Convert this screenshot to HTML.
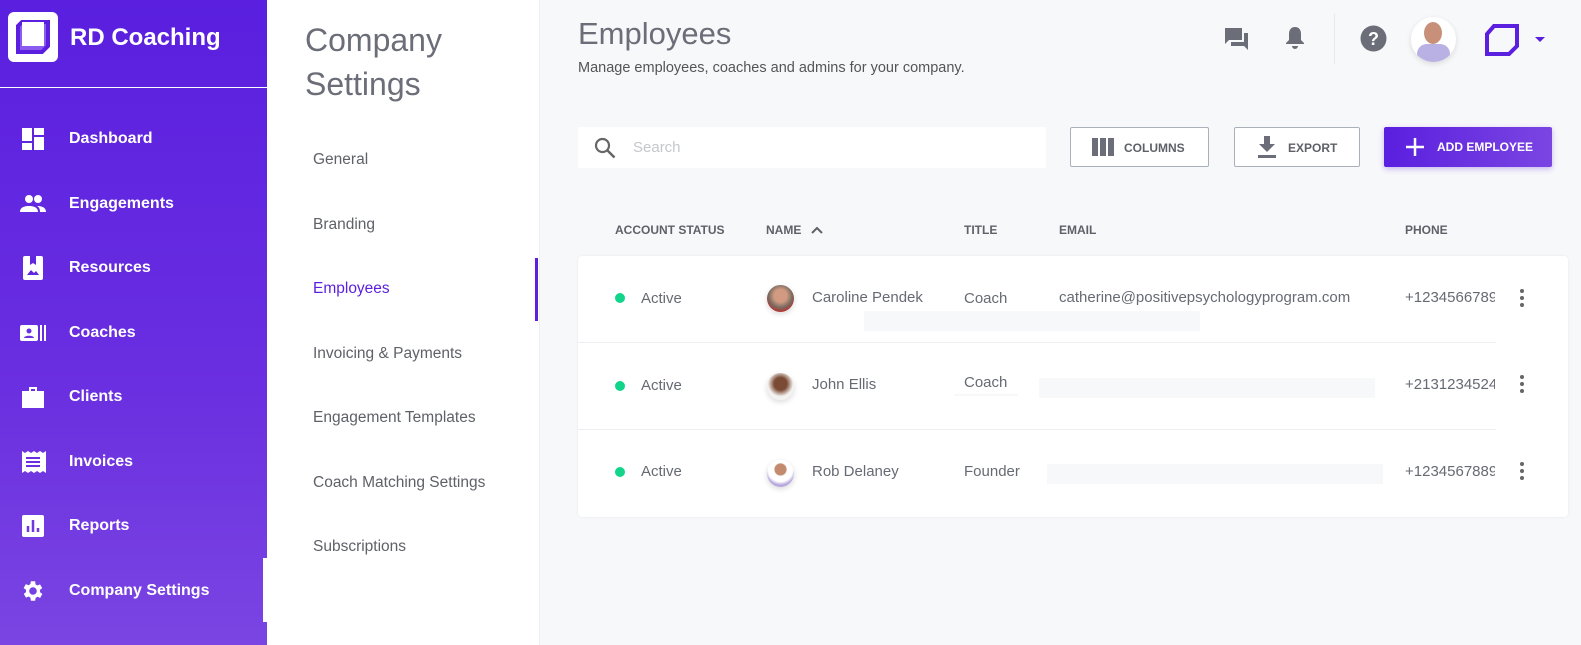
<!DOCTYPE html>
<html><head><meta charset="utf-8"><style>
*{box-sizing:border-box;margin:0;padding:0}
body{width:1581px;height:645px;overflow:hidden;font-family:"Liberation Sans",sans-serif;background:#f7f8fa;position:relative}
.sb{position:absolute;left:0;top:0;width:267px;height:645px;background:linear-gradient(180deg,#5a1fdf 0%,#6a2fe0 60%,#7a45e2 100%);color:#fff}
.logo{position:absolute;left:8px;top:12px;width:50px;height:50px;background:#fff;border-radius:6px}
.brand{position:absolute;left:70px;top:24px;font-size:24px;font-weight:bold}
.div{position:absolute;left:0;top:87px;width:267px;height:1px;background:#fff}
.nav{position:absolute;left:69px;font-size:16px;font-weight:bold}
.ic{position:absolute;left:20px;width:26px;height:26px}
.sel{position:absolute;left:263px;top:558px;width:4px;height:64px;background:#fff}
.p2{position:absolute;left:267px;top:0;width:273px;height:645px;background:#fff;border-right:1px solid #eceef2}
.p2 h1{position:absolute;left:38px;top:18px;font-size:32px;font-weight:normal;color:#6b6e78;line-height:44px}
.p2 a{position:absolute;left:46px;font-size:15.5px;color:#5f6169}
.act{position:absolute;left:268px;top:258px;width:3px;height:63px;background:#5a1fdf}
.t{position:absolute;color:#6b6e78}
.hd{position:absolute;top:223px;font-size:12px;font-weight:bold;color:#5f6169}
.card{position:absolute;left:578px;top:256px;width:990px;height:261px;background:#fff;border-radius:4px;box-shadow:0 0 2px rgba(0,0,0,.08)}
.row{position:absolute;font-size:15px;color:#666a73}
.dot{position:absolute;left:615px;width:10px;height:10px;border-radius:50%;background:#12d48a}
.av{position:absolute;left:767px;width:27px;height:27px;border-radius:50%;box-shadow:0 2px 6px rgba(0,0,0,.15)}
.kb{position:absolute;left:1520px;width:4px}
.kb i{display:block;width:4px;height:4px;border-radius:50%;background:#666;margin-bottom:3px}
.ph{position:absolute;background:#f7f8fa}
.btn{position:absolute;top:127px;height:40px;border:1px solid #a9b0ba;border-radius:2px;background:#fff;font-size:12px;font-weight:bold;color:#5f6169}
</style></head><body>
<div class="sb">
<div class="logo"><svg width="50" height="50" viewBox="0 0 50 50"><path d="M14 10h26v24l-6 6H10V14z" fill="#8a5cf0" stroke="#5a1fdf" stroke-width="4"/><rect x="14" y="10" width="22" height="24" fill="#fff"/></svg></div>
<div class="brand">RD Coaching</div>
<div class="div"></div>
<svg class="ic" style="top:126px" viewBox="0 0 26 26"><path d="M2 2h10v13H2zM14 2h10v7H14zM14 11h10v13H14zM2 17h10v7H2z" fill="#fff"/></svg><div class="nav" style="top:130px">Dashboard</div>
<svg class="ic" style="top:191px" viewBox="0 0 26 26"><circle cx="9" cy="8" r="4" fill="#fff"/><circle cx="18" cy="8" r="4" fill="#fff"/><path d="M0 21c0-5 5-6 9-6s9 1 9 6zM17 15c4 0 9 1 9 6h-6c0-3-1-5-3-6z" fill="#fff"/></svg><div class="nav" style="top:195px">Engagements</div>
<svg class="ic" style="top:255px" viewBox="0 0 26 26"><rect x="3" y="1" width="20" height="24" rx="2" fill="#fff"/><path d="M10 1h6v9l-3-2-3 2z" fill="#6226e0"/><path d="M7 20l4-5 3 3 2-2 3 4z" fill="#6226e0"/></svg><div class="nav" style="top:259px">Resources</div>
<svg class="ic" style="top:320px" viewBox="0 0 26 26"><rect x="0" y="5" width="18" height="16" rx="2" fill="#fff"/><circle cx="9" cy="11" r="2.5" fill="#6a2fe0"/><path d="M4 18c0-3 10-3 10 0z" fill="#6a2fe0"/><rect x="20" y="5" width="2" height="16" fill="#fff"/><rect x="24" y="5" width="2" height="16" fill="#fff"/></svg><div class="nav" style="top:324px">Coaches</div>
<svg class="ic" style="top:384px" viewBox="0 0 26 26"><path d="M9 3h8v4h7v17H2V7h7zM11 5v2h4V5z" fill="#fff"/></svg><div class="nav" style="top:388px">Clients</div>
<svg class="ic" style="top:449px" viewBox="0 0 26 26"><path d="M2 2l3 2 3-2 3 2 3-2 3 2 3-2 3 2 3-2v22l-3-2-3 2-3-2-3 2-3-2-3 2-3-2-3 2z" fill="#fff"/><path d="M6 9h14M6 13h14M6 17h14" stroke="#6a2fe0" stroke-width="2"/></svg><div class="nav" style="top:453px">Invoices</div>
<svg class="ic" style="top:513px" viewBox="0 0 26 26"><rect x="2" y="2" width="22" height="22" rx="2" fill="#fff"/><path d="M8 19v-6M13 19V7M18 19v-4" stroke="#6f38e0" stroke-width="2.5"/></svg><div class="nav" style="top:517px">Reports</div>
<svg class="ic" style="top:578px" viewBox="0 0 24 24"><path fill="#fff" d="M19.4 13a7.5 7.5 0 000-2l2.1-1.6-2-3.5-2.5 1a7 7 0 00-1.7-1L15 3h-4l-.4 2.7a7 7 0 00-1.7 1l-2.5-1-2 3.5L6.6 11a7.5 7.5 0 000 2l-2.1 1.6 2 3.5 2.5-1a7 7 0 001.7 1L11 21h4l.4-2.7a7 7 0 001.7-1l2.5 1 2-3.5zM13 15.5a3.5 3.5 0 110-7 3.5 3.5 0 010 7z" transform="translate(-1 0)"/></svg><div class="nav" style="top:582px">Company Settings</div>
<div class="sel"></div>
</div>
<div class="p2"><h1>Company<br>Settings</h1>
<a style="top:151px">General</a><a style="top:216px">Branding</a><a style="top:280px;color:#5a1fdf">Employees</a><a style="top:345px">Invoicing &amp; Payments</a><a style="top:409px">Engagement Templates</a><a style="top:474px">Coach Matching Settings</a><a style="top:538px">Subscriptions</a>
<div class="act"></div></div>
<div class="t" style="left:578px;top:16px;font-size:31px">Employees</div>
<div class="t" style="left:578px;top:60px;font-size:14.5px;color:#555">Manage employees, coaches and admins for your company.</div>
<svg style="position:absolute;left:1224px;top:26px" width="26" height="26" viewBox="0 0 26 26"><path d="M1 2h17v12H5l-4 4zM20 7h4v17l-4-4H7v-4h13z" fill="#6b6e78"/></svg>
<svg style="position:absolute;left:1284px;top:25px" width="22" height="26" viewBox="0 0 22 26"><path d="M11 2c-4 0-6 3-6 7v6l-3 3v1h18v-1l-3-3V9c0-4-2-7-6-7zM8 21h6a3 3 0 01-6 0z" fill="#6b6e78"/></svg>
<div style="position:absolute;left:1334px;top:14px;width:1px;height:50px;background:#e6e8ec"></div>
<svg style="position:absolute;left:1360px;top:25px" width="27" height="27" viewBox="0 0 27 27"><circle cx="13.5" cy="13.5" r="13" fill="#6b6e78"/><text x="13.5" y="20" text-anchor="middle" font-size="18" font-weight="bold" fill="#fff" font-family="Liberation Sans">?</text></svg>
<div style="position:absolute;left:1411px;top:17px;width:45px;height:45px;border-radius:50%;background:#fff;box-shadow:0 2px 6px rgba(0,0,0,.12);overflow:hidden"><div style="position:absolute;left:13px;top:5px;width:18px;height:22px;border-radius:50%;background:#c89078"></div><div style="position:absolute;left:6px;top:27px;width:33px;height:20px;border-radius:10px 10px 0 0;background:#b9b0e4"></div></div>
<svg style="position:absolute;left:1485px;top:24px" width="34" height="32" viewBox="0 0 34 32"><path d="M9 2h23v20l-8 8H2V10z" fill="none" stroke="#5a1fdf" stroke-width="4"/></svg>
<div style="position:absolute;left:1535px;top:37px;border:5px solid transparent;border-top-color:#5a1fdf"></div>
<div style="position:absolute;left:578px;top:127px;width:468px;height:41px;background:#fff;border-radius:2px"></div>
<svg style="position:absolute;left:594px;top:137px" width="22" height="22" viewBox="0 0 22 22"><circle cx="8.5" cy="8.5" r="6.5" fill="none" stroke="#666" stroke-width="2.2"/><path d="M13.5 13.5l7 7" stroke="#666" stroke-width="2.5"/></svg>
<div style="position:absolute;left:633px;top:139px;font-size:15px;color:#c4c7cd">Search</div>
<div class="btn" style="left:1070px;width:139px"><svg style="position:absolute;left:21px;top:10px" width="22" height="18" viewBox="0 0 22 18"><path d="M0 0h6v18H0zM8 0h6v18H8zM16 0h6v18h-6z" fill="#6b6e78"/></svg><span style="position:absolute;left:53px;top:13px">COLUMNS</span></div>
<div class="btn" style="left:1234px;width:126px"><svg style="position:absolute;left:22px;top:8px" width="20" height="22" viewBox="0 0 20 22"><path d="M7 0h6v8h5l-8 8-8-8h5zM1 19h18v3H1z" fill="#6b6e78"/></svg><span style="position:absolute;left:53px;top:13px">EXPORT</span></div>
<div style="position:absolute;left:1384px;top:127px;width:168px;height:40px;background:linear-gradient(90deg,#5a1fdf,#7a45e2);border-radius:2px;box-shadow:0 2px 6px rgba(90,31,223,.3)"><svg style="position:absolute;left:22px;top:11px" width="18" height="18"><path d="M9 0v18M0 9h18" stroke="#fff" stroke-width="2.5"/></svg><span style="position:absolute;left:53px;top:13px;font-size:12px;font-weight:bold;color:#fff">ADD EMPLOYEE</span></div>
<div class="hd" style="left:615px">ACCOUNT STATUS</div><div class="hd" style="left:766px">NAME</div>
<svg style="position:absolute;left:810px;top:225px" width="14" height="10"><path d="M2 8l5-5 5 5" fill="none" stroke="#5f6169" stroke-width="2"/></svg>
<div class="hd" style="left:964px">TITLE</div><div class="hd" style="left:1059px">EMAIL</div><div class="hd" style="left:1405px">PHONE</div>
<div class="card"></div>
<div style="position:absolute;left:578px;top:342px;width:918px;height:1px;background:#eceef2"></div>
<div style="position:absolute;left:578px;top:429px;width:918px;height:1px;background:#eceef2"></div>
<div class="dot" style="top:293px"></div><div class="dot" style="top:381px"></div><div class="dot" style="top:467px"></div>
<div class="row" style="left:641px;top:290px">Active</div><div class="row" style="left:641px;top:377px">Active</div><div class="row" style="left:641px;top:463px">Active</div>
<div class="av" style="top:285px;background:radial-gradient(circle at 50% 40%,#d29a80 30%,#7a6d62 55%,#c0282a 80%)"></div>
<div class="av" style="top:373px;background:radial-gradient(circle at 50% 40%,#7a4a34 30%,#f4f2f0 60%)"></div>
<div class="av" style="top:460px;background:radial-gradient(circle at 50% 35%,#c38a6e 25%,#fff 30%,#fff 55%,#b7a8de 70%)"></div>
<div class="row" style="left:812px;top:289px">Caroline Pendek</div><div class="row" style="left:812px;top:376px">John Ellis</div><div class="row" style="left:812px;top:463px">Rob Delaney</div>
<div class="row" style="left:964px;top:290px">Coach</div><div class="row" style="left:964px;top:374px">Coach</div><div class="row" style="left:964px;top:463px">Founder</div>
<div class="ph" style="left:954px;top:394px;width:64px;height:2px"></div>
<div class="row" style="left:1059px;top:289px">catherine@positivepsychologyprogram.com</div>
<div class="ph" style="left:864px;top:311px;width:336px;height:20px"></div>
<div class="ph" style="left:1039px;top:378px;width:336px;height:20px"></div>
<div class="ph" style="left:1047px;top:464px;width:336px;height:20px"></div>
<div style="position:absolute;left:1405px;top:289px;width:90px;overflow:hidden;white-space:nowrap" class="row">+1234566789</div>
<div style="position:absolute;left:1405px;top:376px;width:90px;overflow:hidden;white-space:nowrap" class="row">+2131234524</div>
<div style="position:absolute;left:1405px;top:463px;width:90px;overflow:hidden;white-space:nowrap" class="row">+1234567889</div>
<div class="kb" style="top:289px"><i></i><i></i><i></i></div><div class="kb" style="top:375px"><i></i><i></i><i></i></div><div class="kb" style="top:462px"><i></i><i></i><i></i></div>
</body></html>
